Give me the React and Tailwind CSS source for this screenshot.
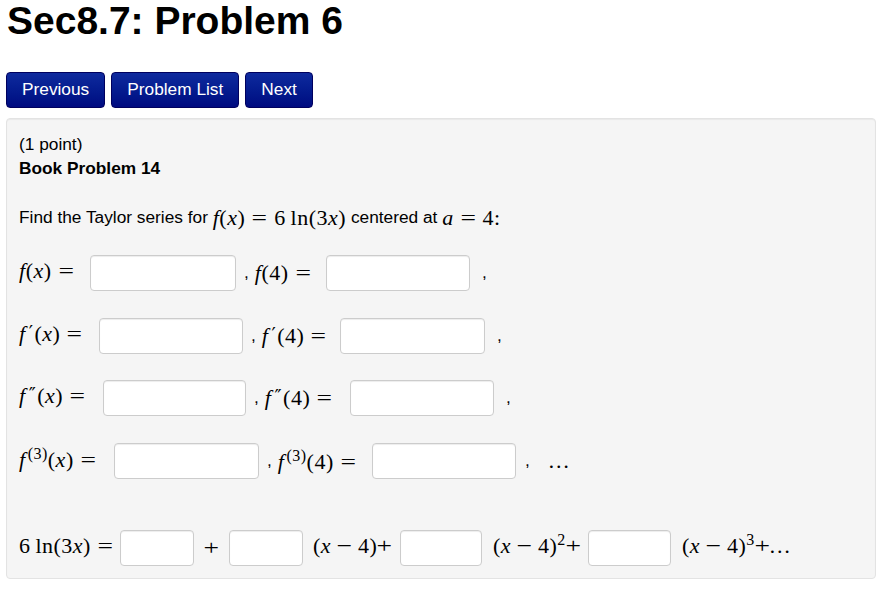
import React from 'react';

const sans = "font-['Liberation_Sans',Arial,sans-serif]";
const mathFont = "font-['Liberation_Serif','DejaVu_Serif',serif] text-[22px] leading-none whitespace-nowrap tracking-[0.5px]";

function M({ children, className = '' }) {
  return <span className={`${mathFont} ${className}`}>{children}</span>;
}

function Eq() {
  return <span className="mx-[8px] inline-block scale-x-125">=</span>;
}

function Op({ children }) {
  return <span className="mx-[7px] inline-block scale-x-125">{children}</span>;
}

function Box({ w }) {
  return (
    <input
      type="text"
      className={`h-[36px] ${w} shrink-0 rounded-[4px] border border-[#cccccc] bg-white shadow-[inset_0_1px_1px_rgba(0,0,0,0.075)] outline-none`}
    />
  );
}

function Btn({ children }) {
  return (
    <button className="h-[36px] rounded-[4px] border border-[#00005e] bg-gradient-to-b from-[#0f2a9e] to-[#000a80] px-[15px] text-[17.3px] text-white">
      {children}
    </button>
  );
}

function Fn({ prime, arg }) {
  return (
    <M>
      <i>f</i>
      {prime && (
        <span className="relative -top-[2px] ml-[3px] mr-[1px] font-['DejaVu_Sans',sans-serif] text-[19px]">{prime}</span>
      )}
      ({arg === 'x' ? <i>x</i> : arg})
      <Eq />
    </M>
  );
}

function Fn3({ arg }) {
  return (
    <M>
      <i>f</i>
      <span className="ml-[2px] text-[16px] align-[8px]">(3)</span>({arg === 'x' ? <i>x</i> : arg})
      <Eq />
    </M>
  );
}

function Xm4({ pow }) {
  return (
    <M>
      (<i>x</i>
      <Op>−</Op>4){pow && <sup className="text-[16px]">{pow}</sup>}
      <span className="ml-[1px] inline-block scale-x-125">+</span>
    </M>
  );
}

export default function App() {
  return (
    <div className={`${sans} text-black bg-white h-[591px] w-[886px] overflow-hidden`}>
      <h1 className="pl-[7px] text-[39px] font-bold leading-[1.1]">Sec8.7: Problem 6</h1>

      <div className="mt-[29px] flex gap-[6px] pl-[6px]">
        <Btn>Previous</Btn>
        <Btn>Problem List</Btn>
        <Btn>Next</Btn>
      </div>

      <div className="mx-[6px] mt-[10px] w-[870px] rounded-[4px] border border-[#e3e3e3] bg-[#f5f5f5] pl-[12px] pt-[13px] pb-[12px] text-[17.3px] shadow-[inset_0_1px_1px_rgba(0,0,0,0.05)]">
        <div className="leading-[24px]">(1 point)</div>
        <div className="font-bold leading-[24px]">Book Problem 14</div>

        <div className="mt-[26px] flex h-[24px] items-center">
          <span>Find the Taylor series for&nbsp;</span>
          <M>
            <i>f</i>(<i>x</i>)<Eq />6&thinsp;ln(3<i>x</i>)
          </M>
          <span>&nbsp;centered at&nbsp;</span>
          <M>
            <i>a</i>
            <Eq />4:
          </M>
        </div>

        {/* row 1 */}
        <div className="mt-[25.5px] flex h-[36px] items-center">
          <div className="w-[71px] shrink-0"><Fn arg="x" /></div>
          <Box w="w-[146px]" />
          <div className="flex w-[90px] shrink-0 items-center pl-[8px]">
            <span className="mr-[6px]">,</span>
            <Fn arg="4" />
          </div>
          <Box w="w-[144px]" />
          <span className="pl-[12px]">,</span>
        </div>

        {/* row 2 */}
        <div className="mt-[26.5px] flex h-[36px] items-center">
          <div className="w-[80px] shrink-0"><Fn prime="′" arg="x" /></div>
          <Box w="w-[144px]" />
          <div className="flex w-[97px] shrink-0 items-center pl-[8px]">
            <span className="mr-[6px]">,</span>
            <Fn prime="′" arg="4" />
          </div>
          <Box w="w-[145px]" />
          <span className="pl-[12px]">,</span>
        </div>

        {/* row 3 */}
        <div className="mt-[26.5px] flex h-[36px] items-center">
          <div className="w-[84px] shrink-0"><Fn prime="″" arg="x" /></div>
          <Box w="w-[143px]" />
          <div className="flex w-[104px] shrink-0 items-center pl-[8px]">
            <span className="mr-[6px]">,</span>
            <Fn prime="″" arg="4" />
          </div>
          <Box w="w-[144px]" />
          <span className="pl-[12px]">,</span>
        </div>

        {/* row 4 */}
        <div className="mt-[26.5px] flex h-[36px] items-center">
          <div className="w-[95px] shrink-0"><Fn3 arg="x" /></div>
          <Box w="w-[145px]" />
          <div className="flex w-[113px] shrink-0 items-center pl-[8px]">
            <span className="mr-[6px]">,</span>
            <Fn3 arg="4" />
          </div>
          <Box w="w-[144px]" />
          <span className="pl-[9px]">,</span>
          <M className="pl-[18px] tracking-[3px]">…</M>
        </div>

        {/* row 5 */}
        <div className="mt-[51px] flex h-[36px] items-center">
          <div className="w-[101px] shrink-0">
            <M>
              6&thinsp;ln(3<i>x</i>)<Eq />
            </M>
          </div>
          <Box w="w-[74px]" />
          <div className="flex w-[35px] shrink-0 justify-center">
            <M><span className="inline-block scale-x-125">+</span></M>
          </div>
          <Box w="w-[74px]" />
          <div className="w-[97px] shrink-0 pl-[10px]">
            <Xm4 />
          </div>
          <Box w="w-[82px]" />
          <div className="w-[106px] shrink-0 pl-[11px]">
            <Xm4 pow="2" />
          </div>
          <Box w="w-[83px]" />
          <div className="pl-[11px]">
            <Xm4 pow="3" />
            <M className="tracking-[2px]">…</M>
          </div>
        </div>
      </div>
    </div>
  );
}
